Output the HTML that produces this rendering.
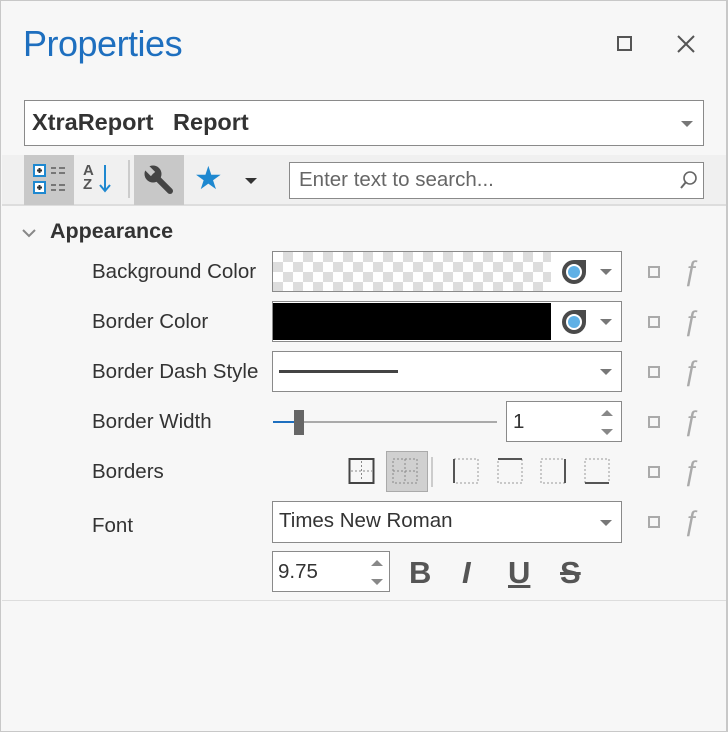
<!DOCTYPE html>
<html><head><meta charset="utf-8"><style>
*{box-sizing:border-box;margin:0;padding:0}
body{width:728px;height:732px;background:#f7f7f7;font-family:"Liberation Sans",sans-serif;color:#333;position:relative;overflow:hidden}
.frame{position:absolute;left:0;top:0;width:728px;height:732px;border:1px solid #c8c8c8;border-right:2px solid #c8c8c8}
.abs{position:absolute}
.title{left:23px;top:23px;font-size:36px;color:#1e6fbf;letter-spacing:-0.5px}
.box{background:#fff;border:1px solid #8a8a8a}
.lbl{font-size:20.5px;color:#333;left:92px}
.dd{position:absolute;width:0;height:0;border-left:6px solid transparent;border-right:6px solid transparent;border-top:6px solid #777}
.sq{position:absolute;left:648px;width:12px;height:12px;border:2px solid #aaa}
.f{position:absolute;left:683px;font-family:"Liberation Sans",sans-serif;font-style:italic;font-size:28px;color:#aaa}
.bi{position:absolute;font-family:"Liberation Sans",sans-serif;font-weight:bold;font-size:31px;color:#555}
</style></head><body>
<div class="frame"></div>
<div class="abs title">Properties</div>
<div class="abs" style="left:617px;top:36px;width:15px;height:15px;border:2px solid #555"></div>
<svg class="abs" style="left:677px;top:35px" width="18" height="18"><path d="M1 1L17 17M17 1L1 17" stroke="#555" stroke-width="2"/></svg>
<div class="abs box" style="left:24px;top:100px;width:680px;height:46px"></div>
<div class="abs" style="left:32px;top:109px;font-size:23.5px;font-weight:bold;color:#333">XtraReport&nbsp;&nbsp;&nbsp;Report</div>
<div class="dd" style="left:681px;top:121px"></div>
<div class="abs" style="left:2px;top:155px;width:724px;height:51px;background:#f0f0f0;border-bottom:2px solid #ddd"></div>
<div class="abs" style="left:24px;top:155px;width:50px;height:50px;background:#c8c8c8"></div>
<svg class="abs" style="left:33px;top:164px" width="34" height="32">
<rect x="1" y="1" width="11" height="11" fill="#fff" stroke="#1e88d0" stroke-width="2"/><path d="M4 6.5h5M6.5 4v5" stroke="#333" stroke-width="2"/>
<rect x="1" y="18" width="11" height="11" fill="#fff" stroke="#1e88d0" stroke-width="2"/><path d="M4 23.5h5M6.5 21v5" stroke="#333" stroke-width="2"/>
<path d="M18 4h5M26 4h6M18 9h5M26 9h6M18 21h5M26 21h6M18 26h5M26 26h6" stroke="#777" stroke-width="2"/></svg>
<div class="abs" style="left:83px;top:164px;font-size:15px;font-weight:bold;line-height:14px;color:#555">A<br>Z</div>
<svg class="abs" style="left:98px;top:163px" width="16" height="32"><path d="M7 2v26M2 22l5 6 5-6" stroke="#1e88d0" stroke-width="2" fill="none"/></svg>
<div class="abs" style="left:128px;top:160px;width:2px;height:38px;background:#ccc"></div>
<div class="abs" style="left:134px;top:155px;width:50px;height:50px;background:#c8c8c8"></div>
<svg class="abs" style="left:143px;top:164px" width="32" height="32"><circle cx="10" cy="10" r="8.5" fill="#444"/><path d="M10 10L2 2" stroke="#c8c8c8" stroke-width="6"/><path d="M12 12L27 27" stroke="#444" stroke-width="6" stroke-linecap="round"/></svg>
<div class="abs" style="left:194px;top:160px;font-size:32px;color:#1e88d0;line-height:36px">★</div>
<div class="dd" style="left:245px;top:178px;border-top-color:#333"></div>
<div class="abs box" style="left:289px;top:162px;width:415px;height:37px"></div>
<div class="abs" style="left:299px;top:168px;font-size:20.5px;color:#666">Enter text to search...</div>
<svg class="abs" style="left:679px;top:170px" width="20" height="20"><circle cx="11" cy="8" r="6" stroke="#666" stroke-width="1.6" fill="none"/><path d="M7 12L2 18" stroke="#666" stroke-width="2"/></svg>
<svg class="abs" style="left:22px;top:228px" width="14" height="10"><path d="M1 2l6 6 6-6" stroke="#888" stroke-width="2" fill="none"/></svg>
<div class="abs" style="left:50px;top:219px;font-size:21.5px;font-weight:bold;color:#333">Appearance</div>

<div class="abs lbl" style="top:260px">Background Color</div>
<div class="abs box" style="left:272px;top:251px;width:350px;height:41px;background-color:#fff;background-image:linear-gradient(45deg,#ddd 25%,transparent 25%,transparent 75%,#ddd 75%),linear-gradient(45deg,#ddd 25%,transparent 25%,transparent 75%,#ddd 75%);background-size:20px 20px;background-position:0 0,10px 10px"></div>
<div class="abs" style="left:551px;top:252px;width:70px;height:39px;background:#fff"></div>
<div class="abs lbl" style="top:310px">Border Color</div>
<div class="abs box" style="left:272px;top:301px;width:350px;height:41px"></div>
<div class="abs" style="left:273px;top:303px;width:278px;height:37px;background:#000"></div>
<svg class="abs" style="left:560px;top:258px" width="30" height="30"><path d="M14 2a12 12 0 1 0 12 12V2z" fill="#4a4a4a"/><circle cx="14" cy="14" r="8" fill="#fff"/><circle cx="14" cy="14" r="6" fill="#5fb0e5"/></svg>
<svg class="abs" style="left:560px;top:308px" width="30" height="30"><path d="M14 2a12 12 0 1 0 12 12V2z" fill="#4a4a4a"/><circle cx="14" cy="14" r="8" fill="#fff"/><circle cx="14" cy="14" r="6" fill="#5fb0e5"/></svg>
<div class="dd" style="left:600px;top:269px"></div>
<div class="dd" style="left:600px;top:319px"></div>
<div class="abs lbl" style="top:360px">Border Dash Style</div>
<div class="abs box" style="left:272px;top:351px;width:350px;height:41px"></div>
<div class="abs" style="left:279px;top:370px;width:119px;height:3px;background:#444"></div>
<div class="dd" style="left:600px;top:369px"></div>
<div class="abs lbl" style="top:410px">Border Width</div>
<div class="abs" style="left:273px;top:421px;width:224px;height:2px;background:#aaa"></div>
<div class="abs" style="left:273px;top:421px;width:22px;height:2px;background:#1e6fbf"></div>
<div class="abs" style="left:294px;top:410px;width:10px;height:25px;background:#666"></div>
<div class="abs box" style="left:506px;top:401px;width:116px;height:41px"></div>
<div class="abs" style="left:513px;top:410px;font-size:20.5px">1</div>
<svg class="abs" style="left:600px;top:410px" width="14" height="26"><path d="M1 6l6-6 6 6zM1 19l6 6 6-6z" fill="#888"/></svg>
<div class="abs lbl" style="top:460px">Borders</div>
<div class="abs" style="left:386px;top:451px;width:42px;height:41px;background:#d0d0d0;border:1px solid #aaa"></div>
<svg class="abs" style="left:348px;top:457px" width="270" height="30">
<rect x="1.5" y="2" width="24" height="24" fill="none" stroke="#444" stroke-width="2"/><path d="M13.5 4v20M3 14h21" stroke="#888" stroke-dasharray="2 2"/>
<rect x="45" y="2" width="24" height="24" fill="none" stroke="#888" stroke-dasharray="2 2"/><path d="M57 2v24M45 14h24" stroke="#888" stroke-dasharray="2 2"/>
<path d="M84 0v32" stroke="#ccc" stroke-width="2"/>
<rect x="106" y="2" width="24" height="24" fill="none" stroke="#999" stroke-dasharray="2 2"/><path d="M106 2v24" stroke="#555" stroke-width="2"/>
<rect x="150" y="2" width="24" height="24" fill="none" stroke="#999" stroke-dasharray="2 2"/><path d="M150 2h24" stroke="#555" stroke-width="2"/>
<rect x="193" y="2" width="24" height="24" fill="none" stroke="#999" stroke-dasharray="2 2"/><path d="M217 2v24" stroke="#555" stroke-width="2"/>
<rect x="237" y="2" width="24" height="24" fill="none" stroke="#999" stroke-dasharray="2 2"/><path d="M237 26h24" stroke="#555" stroke-width="2"/>
</svg>
<div class="abs lbl" style="top:514px">Font</div>
<div class="abs box" style="left:272px;top:501px;width:350px;height:42px"></div>
<div class="abs" style="left:279px;top:509px;font-size:20.5px">Times New Roman</div>
<div class="dd" style="left:600px;top:520px"></div>
<div class="abs box" style="left:272px;top:551px;width:118px;height:41px"></div>
<div class="abs" style="left:278px;top:560px;font-size:20.5px">9.75</div>
<svg class="abs" style="left:370px;top:560px" width="14" height="26"><path d="M1 6l6-6 6 6zM1 19l6 6 6-6z" fill="#888"/></svg>
<div class="bi" style="left:409px;top:555px">B</div>
<div class="bi" style="left:462px;top:555px;font-style:italic">I</div>
<div class="bi" style="left:508px;top:555px;text-decoration:underline">U</div>
<div class="bi" style="left:560px;top:555px;text-decoration:line-through">S</div>

<div class="sq" style="top:266px"></div><div class="f" style="top:255px">ƒ</div>
<div class="sq" style="top:316px"></div><div class="f" style="top:305px">ƒ</div>
<div class="sq" style="top:366px"></div><div class="f" style="top:355px">ƒ</div>
<div class="sq" style="top:416px"></div><div class="f" style="top:405px">ƒ</div>
<div class="sq" style="top:466px"></div><div class="f" style="top:455px">ƒ</div>
<div class="sq" style="top:516px"></div><div class="f" style="top:505px">ƒ</div>
<div class="abs" style="left:2px;top:600px;width:724px;height:1px;background:#ddd"></div>
</body></html>
